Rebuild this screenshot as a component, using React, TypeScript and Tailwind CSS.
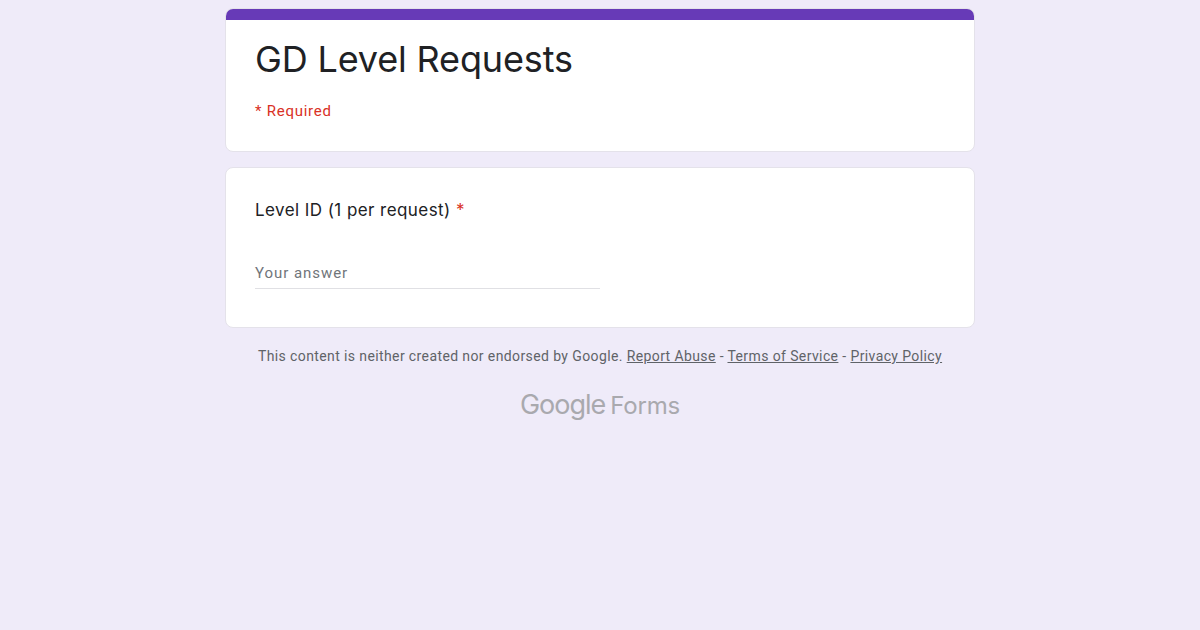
export default function App() {
  return (
    <div className="min-h-[630px] bg-[#efebf9] font-['Roboto',sans-serif]">
      <div className="mx-auto flex w-[750px] flex-col pt-2">
        <div className="h-[144px] overflow-hidden rounded-lg border border-[#e4e2ea] bg-white">
          <div className="-mx-px -mt-px h-3 bg-[#673ab7]" />
          <div className="px-[29px] pt-[14px]">
            <h1 className="font-['Inter',sans-serif] text-[36px] leading-[50px] tracking-[-0.15px] text-[#202124]">
              GD Level Requests
            </h1>
            <p className="mt-[17px] text-[15px] leading-5 tracking-[0.75px] text-[#d93025]">* Required</p>
          </div>
        </div>

        <div className="mt-[15px] h-[161px] rounded-lg border border-[#e4e2ea] bg-white px-[29px] pt-[30px]">
          <p className="font-['Inter',sans-serif] text-[17px] leading-6 tracking-[0.43px] text-[#202124]">
            Level ID (1 per request) <span className="text-[#d93025]">*</span>
          </p>
          <div className="mt-[26px] h-[41px] w-[345px] border-b border-[#e0e0e4] pt-[15px] text-[15px] leading-5 tracking-[0.95px] text-[#70757a]">
            Your answer
          </div>
        </div>

        <p className="mt-[18px] whitespace-nowrap text-center text-sm leading-5 tracking-[0.39px] text-[#5f6368]">
          This content is neither created nor endorsed by Google. <a className="underline">Report Abuse</a> - <a className="underline">Terms of Service</a> - <a className="underline">Privacy Policy</a>
        </p>

        <div className="mt-[21px] flex items-baseline justify-center gap-[5px] font-['Inter',sans-serif] text-[#a9a9ae]">
          <span className="text-[27px] leading-[36px] tracking-[-1px]">Google</span>
          <span className="text-[24px] leading-[36px] tracking-[-0.2px]">Forms</span>
        </div>
      </div>
    </div>
  );
}
